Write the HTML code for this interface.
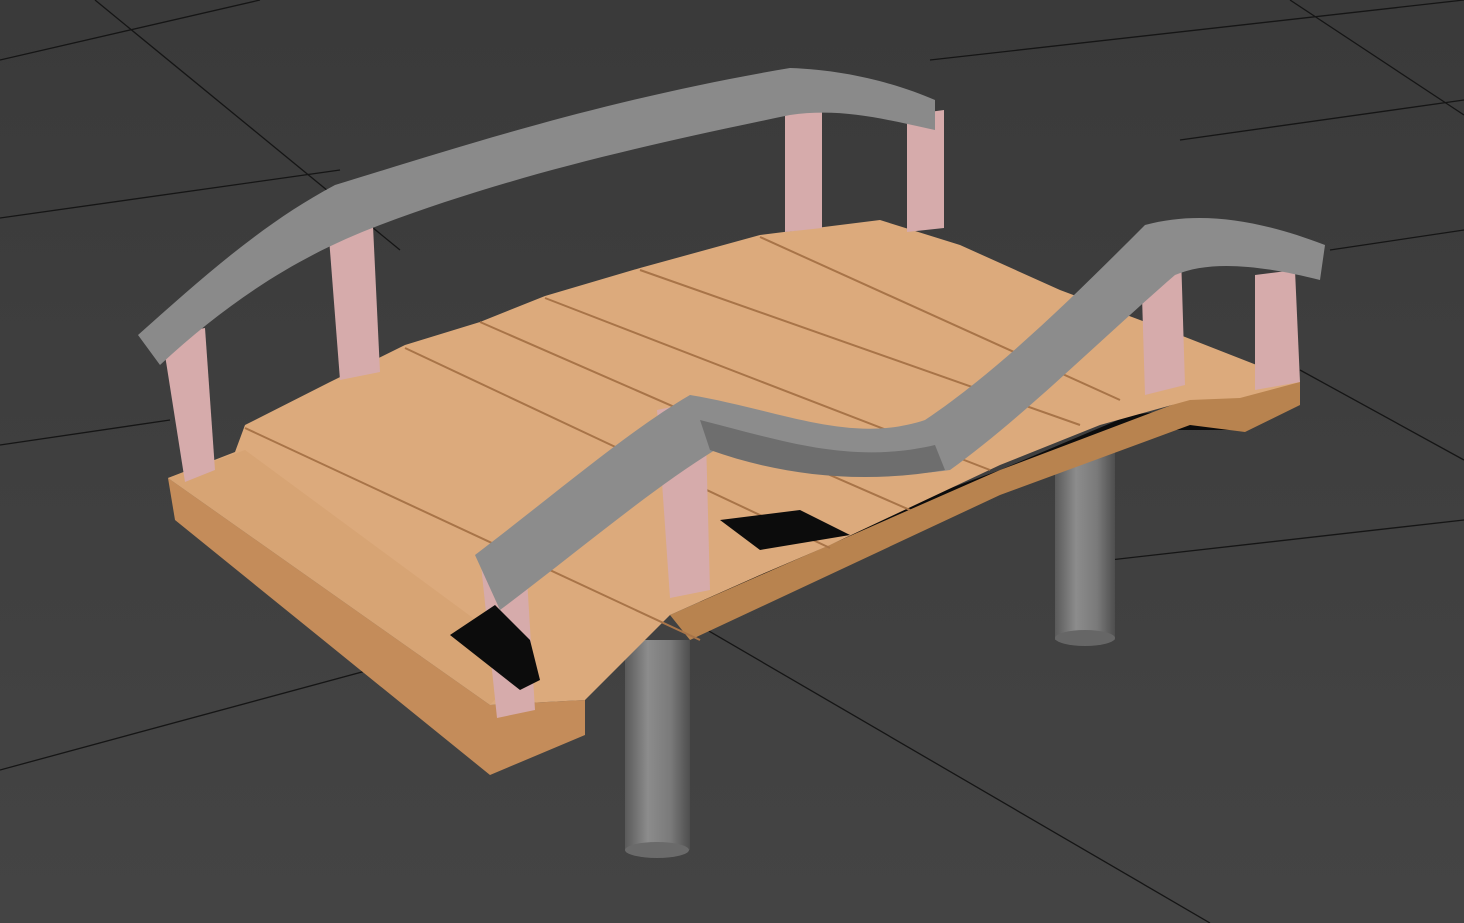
<!DOCTYPE html>
<html><head><meta charset="utf-8"><style>
html,body{margin:0;padding:0;background:#3d3d3d;overflow:hidden}
svg{display:block}
</style></head><body>
<svg width="1464" height="923" viewBox="0 0 1464 923" xmlns="http://www.w3.org/2000/svg">
<defs>
<linearGradient id="leg" x1="0" x2="1" y1="0" y2="0">
<stop offset="0" stop-color="#5a5a5a"/><stop offset="0.35" stop-color="#8c8c8c"/><stop offset="0.7" stop-color="#7a7a7a"/><stop offset="1" stop-color="#4e4e4e"/>
</linearGradient>
<linearGradient id="bg" x1="0" x2="0" y1="0" y2="1">
<stop offset="0" stop-color="#3a3a3a"/><stop offset="1" stop-color="#444"/>
</linearGradient>
</defs>
<rect width="1464" height="923" fill="url(#bg)"/>
<g stroke="#151515" stroke-width="1.3" fill="none">
<line x1="0" y1="218" x2="340" y2="170"/>
<line x1="95" y1="0" x2="400" y2="250"/>
<line x1="0" y1="60" x2="260" y2="0"/>
<line x1="0" y1="770" x2="480" y2="640"/>
<line x1="690" y1="620" x2="1210" y2="923"/>
<line x1="1290" y1="0" x2="1464" y2="115"/>
<line x1="1180" y1="140" x2="1464" y2="100"/>
<line x1="1300" y1="370" x2="1464" y2="460"/>
<line x1="1330" y1="250" x2="1464" y2="230"/>
<line x1="930" y1="60" x2="1464" y2="0"/>
<line x1="0" y1="445" x2="170" y2="420"/>
<line x1="1110" y1="560" x2="1464" y2="520"/>
</g>
<rect x="1055" y="450" width="60" height="190" fill="url(#leg)"/>
<ellipse cx="1085" cy="638" rx="30" ry="8" fill="#666"/>
<polygon points="700,580 1000,470 1130,415 1300,395 1240,430 1130,430 1000,490 870,540 700,620" fill="#0c0c0c"/>
<rect x="625" y="640" width="65" height="210" fill="url(#leg)"/>
<ellipse cx="657" cy="850" rx="32" ry="8" fill="#6a6a6a"/>
<polygon points="168,478 490,705 585,700 585,735 490,775 175,520" fill="#c48c5a"/>
<polygon points="670,615 1000,470 1185,400 1300,382 1300,405 1245,432 1190,425 1000,495 690,640" fill="#b8834f"/>
<polygon points="168,478 235,452 245,425 330,382 405,345 480,322 545,296 640,268 760,235 880,220 960,245 1060,290 1180,335 1300,382 1240,398 1190,400 1100,425 1000,465 830,545 760,575 670,615 585,700 490,705" fill="#dcaa7c"/>
<g stroke="#a87448" stroke-width="2" fill="none">
<line x1="245" y1="428" x2="700" y2="640"/>
<line x1="405" y1="348" x2="830" y2="548"/>
<line x1="480" y1="322" x2="910" y2="510"/>
<line x1="545" y1="298" x2="990" y2="470"/>
<line x1="640" y1="270" x2="1080" y2="425"/>
<line x1="760" y1="237" x2="1120" y2="400"/>
</g>
<polygon points="168,478 245,450 530,660 490,705" fill="#d4a070" opacity="0.6"/>
<polygon points="785,88 822,84 822,228 785,232" fill="#d6abab"/>
<polygon points="907,115 944,110 944,228 907,232" fill="#d6abab"/>
<polygon points="327,212 372,205 380,372 340,380" fill="#d6abab"/>
<polygon points="162,336 205,328 215,470 185,482" fill="#d6abab"/>
<path d="M138,335 C200,280 260,225 335,185 C450,150 600,100 790,68 C850,70 900,85 935,100 L935,130 C880,118 840,108 790,115 C620,150 500,180 380,225 C300,255 230,300 160,365 Z" fill="#8a8a8a"/>
<polygon points="1140,230 1180,222 1185,385 1145,395" fill="#d6abab"/>
<polygon points="1255,275 1295,270 1300,382 1255,390" fill="#d6abab"/>
<polygon points="657,410 705,400 710,590 670,598" fill="#d6abab"/>
<polygon points="480,555 525,545 535,710 497,718" fill="#d6abab"/>
<polygon points="450,635 495,605 530,640 540,680 520,690" fill="#0c0c0c"/>
<polygon points="720,520 800,510 850,535 760,550" fill="#0c0c0c"/>
<path d="M475,555 C560,490 630,430 690,395 C780,410 850,445 925,420 C1000,370 1080,290 1145,225 C1200,210 1260,220 1325,245 L1320,280 C1260,265 1210,260 1175,275 C1100,340 1020,420 950,470 C880,480 800,475 715,450 C650,490 580,550 500,610 Z" fill="#8c8c8c"/>
<path d="M700,420 C780,440 850,465 935,445 L945,470 C860,485 780,475 710,450 Z" fill="#6e6e6e"/>
</svg>
</body></html>
